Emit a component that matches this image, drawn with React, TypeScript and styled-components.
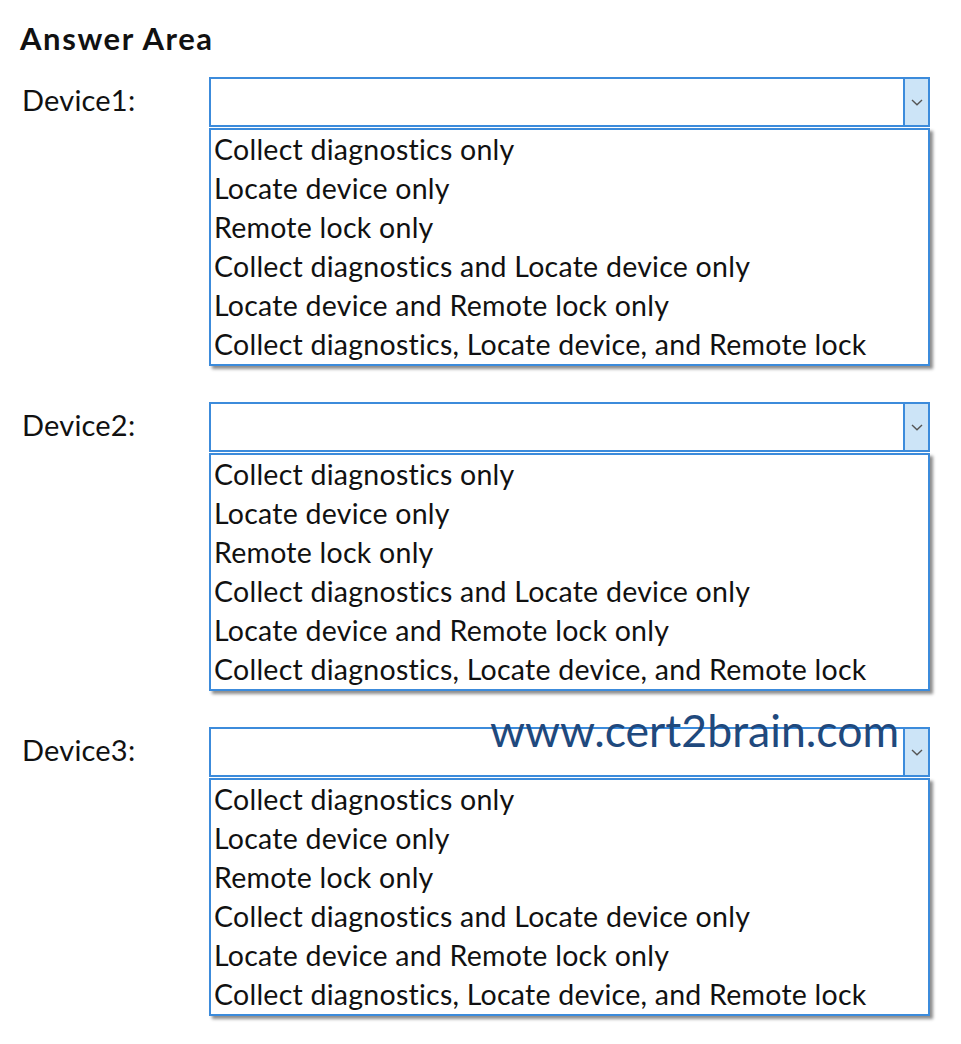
import React from 'react';
import styled, { createGlobalStyle } from 'styled-components';

const GlobalStyle = createGlobalStyle`
  body {
    margin: 0;
    background: #ffffff;
    font-family: Lato, 'Open Sans', sans-serif;
    color: #111111;
  }
`;

const Page = styled.div`
  position: relative;
  width: 961px;
  height: 1044px;
  padding: 20px 0 0 20px;
  box-sizing: border-box;
`;

const Title = styled.h2`
  margin: 0 0 21px 0;
  font-size: 31px;
  font-weight: 700;
  letter-spacing: 1.6px;
  line-height: 36px;
  color: #111111;
`;

const Groups = styled.div`
  display: flex;
  flex-direction: column;
  gap: 36px;
`;

const Group = styled.div`
  display: grid;
  grid-template-columns: 189px 721px;
`;

const Label = styled.div`
  padding-left: 2px;
  font-size: 29px;
  letter-spacing: 0.2px;
  line-height: 46px;
`;

const Field = styled.div`
  display: flex;
  flex-direction: column;
  gap: 1px;
`;

const SelectBox = styled.div`
  display: flex;
  justify-content: flex-end;
  height: 50px;
  box-sizing: border-box;
  border: 2px solid #3c8bdb;
  background: #ffffff;
`;

const ArrowButton = styled.div`
  display: flex;
  align-items: center;
  justify-content: center;
  width: 23px;
  border-left: 2px solid #3c8bdb;
  background: #cce4f7;
`;

const OptionList = styled.ul`
  margin: 0;
  padding: 0 0 0 3px;
  list-style: none;
  border: 2px solid #3c8bdb;
  background: #ffffff;
  box-shadow: 3px 3px 3px rgba(0, 0, 0, 0.45);
`;

const Option = styled.li`
  font-size: 28.5px;
  letter-spacing: 0.25px;
  line-height: 39px;
  white-space: nowrap;
`;

const Watermark = styled.div`
  position: absolute;
  left: 490px;
  top: 702px;
  font-size: 44.6px;
  line-height: 56px;
  color: #1f497d;
`;

const options = [
  'Collect diagnostics only',
  'Locate device only',
  'Remote lock only',
  'Collect diagnostics and Locate device only',
  'Locate device and Remote lock only',
  'Collect diagnostics, Locate device, and Remote lock',
];

const devices = ['Device1:', 'Device2:', 'Device3:'];

const Chevron = () => (
  <svg width="12" height="7" viewBox="0 0 12 7">
    <path d="M1 1 L6 5.8 L11 1" fill="none" stroke="#555555" strokeWidth="1.4" />
  </svg>
);

const App = () => (
  <>
    <GlobalStyle />
    <Page>
      <Title>Answer Area</Title>
      <Groups>
        {devices.map((device) => (
          <Group key={device}>
            <Label>{device}</Label>
            <Field>
              <SelectBox>
                <ArrowButton>
                  <Chevron />
                </ArrowButton>
              </SelectBox>
              <OptionList>
                {options.map((opt) => (
                  <Option key={opt}>{opt}</Option>
                ))}
              </OptionList>
            </Field>
          </Group>
        ))}
      </Groups>
      <Watermark>www.cert2brain.com</Watermark>
    </Page>
  </>
);

export default App;
